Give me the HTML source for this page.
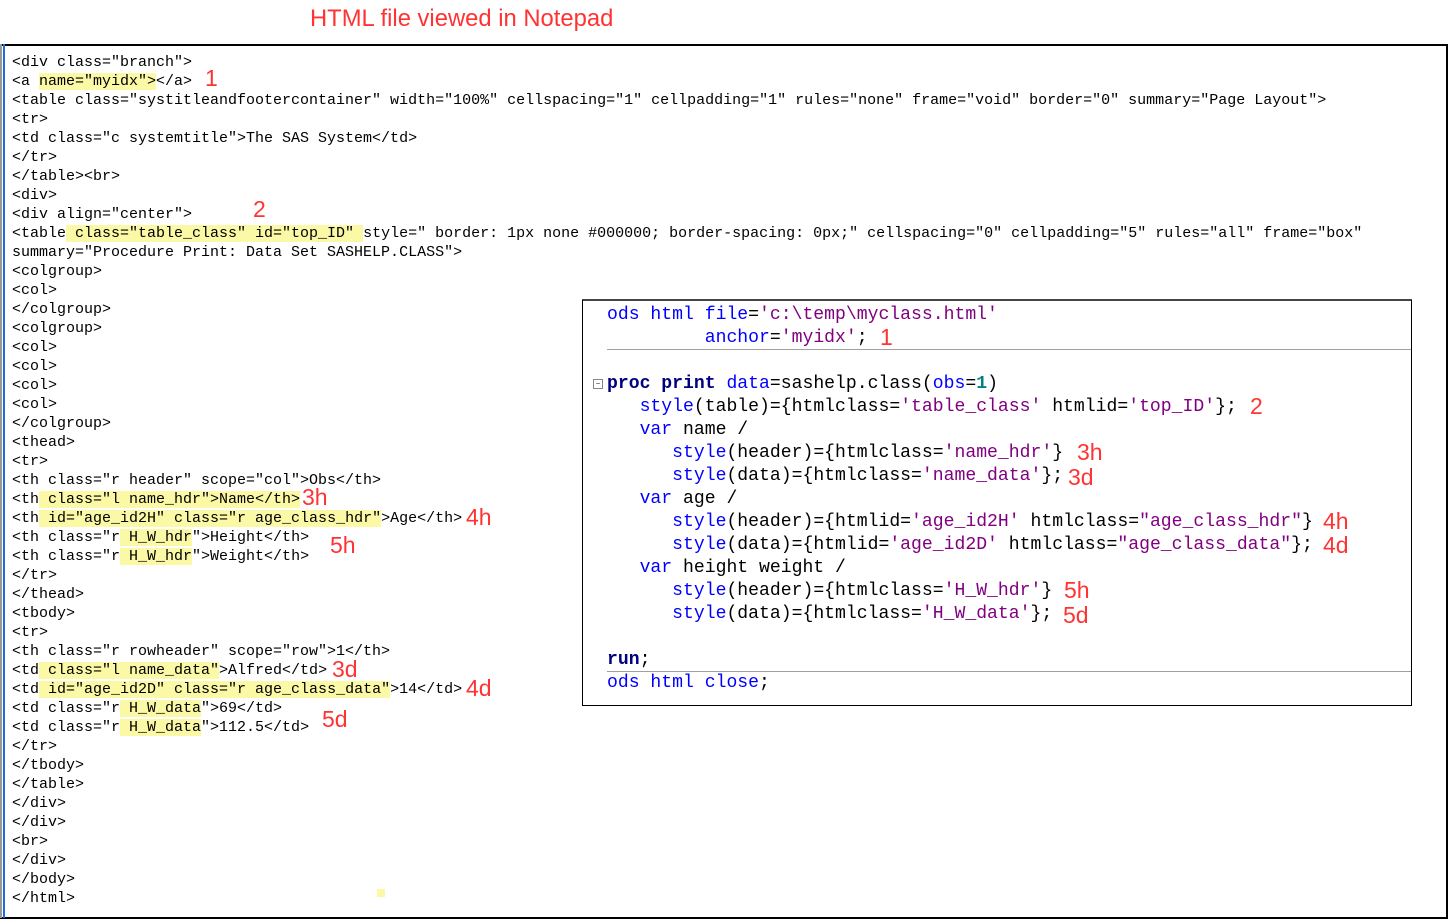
<!DOCTYPE html>
<html><head><meta charset="utf-8"><style>
*{margin:0;padding:0}
body{width:1448px;height:918px;background:#fff;position:relative;overflow:hidden;font-family:"Liberation Sans",sans-serif}
.title{position:absolute;left:310px;top:5px;font-size:23.8px;color:#ff3333;white-space:nowrap}
.frame{position:absolute;left:0;top:44px;width:1446px;height:871px;border-top:2px solid #000;border-right:2px solid #000;border-bottom:2px solid #000}
.gl{position:absolute;left:0;top:44px;width:2px;height:874px;background:#999}
.bl{position:absolute;left:3px;top:44px;width:2px;height:874px;background:#1a6fd8}
pre.l{position:absolute;left:12px;top:53px;font-family:"Liberation Mono",monospace;font-size:15px;line-height:19px;color:#000}
.h{background:#fbf8a6}
.a{position:absolute;font-size:23px;color:#ff3333;line-height:22px}
.box{position:absolute;left:582px;top:299px;width:828px;height:404px;border:1px solid #000;border-top:2px solid #444;background:#fff}
.r{position:absolute;left:607px;font-family:"Liberation Mono",monospace;font-size:18.1px;line-height:22px;white-space:pre;color:#000}
.k{color:#0000ff}.s{color:#800080}.n{color:#008080;font-weight:bold}.b{font-weight:bold;color:#000080}
.sep{position:absolute;left:607px;width:804px;height:1px;background:#a0a0a0}
.dot{position:absolute;left:377px;top:889px;width:8px;height:8px;background:#fbf8a6}
.fold{position:absolute;left:593px;top:379px;width:8px;height:8px;border:1px solid #888;font-size:8px;line-height:8px;text-align:center;color:#333}
</style></head><body>
<div class="title">HTML file viewed in Notepad</div>
<div class="frame"></div><div class="gl"></div><div class="bl"></div>
<pre class="l">&lt;div class="branch"&gt;
&lt;a <span class="h">name="myidx"&gt;</span>&lt;/a&gt;
&lt;table class="systitleandfootercontainer" width="100%" cellspacing="1" cellpadding="1" rules="none" frame="void" border="0" summary="Page Layout"&gt;
&lt;tr&gt;
&lt;td class="c systemtitle"&gt;The SAS System&lt;/td&gt;
&lt;/tr&gt;
&lt;/table&gt;&lt;br&gt;
&lt;div&gt;
&lt;div align="center"&gt;
&lt;table<span class="h"> class="table_class" id="top_ID" </span>style=" border: 1px none #000000; border-spacing: 0px;" cellspacing="0" cellpadding="5" rules="all" frame="box"
summary="Procedure Print: Data Set SASHELP.CLASS"&gt;
&lt;colgroup&gt;
&lt;col&gt;
&lt;/colgroup&gt;
&lt;colgroup&gt;
&lt;col&gt;
&lt;col&gt;
&lt;col&gt;
&lt;col&gt;
&lt;/colgroup&gt;
&lt;thead&gt;
&lt;tr&gt;
&lt;th class="r header" scope="col"&gt;Obs&lt;/th&gt;
&lt;th<span class="h"> class="l name_hdr"&gt;Name&lt;/th&gt;</span>
&lt;th<span class="h"> id="age_id2H" class="r age_class_hdr"</span>&gt;Age&lt;/th&gt;
&lt;th class="r<span class="h"> H_W_hdr</span>"&gt;Height&lt;/th&gt;
&lt;th class="r<span class="h"> H_W_hdr</span>"&gt;Weight&lt;/th&gt;
&lt;/tr&gt;
&lt;/thead&gt;
&lt;tbody&gt;
&lt;tr&gt;
&lt;th class="r rowheader" scope="row"&gt;1&lt;/th&gt;
&lt;td<span class="h"> class="l name_data"</span>&gt;Alfred&lt;/td&gt;
&lt;td<span class="h"> id="age_id2D" class="r age_class_data"</span>&gt;14&lt;/td&gt;
&lt;td class="r<span class="h"> H_W_data</span>"&gt;69&lt;/td&gt;
&lt;td class="r<span class="h"> H_W_data</span>"&gt;112.5&lt;/td&gt;
&lt;/tr&gt;
&lt;/tbody&gt;
&lt;/table&gt;
&lt;/div&gt;
&lt;/div&gt;
&lt;br&gt;
&lt;/div&gt;
&lt;/body&gt;
&lt;/html&gt;</pre>
<div class="dot"></div>
<div class="a" style="left:205px;top:67px">1</div>
<div class="a" style="left:253px;top:198px">2</div>
<div class="a" style="left:302px;top:486px">3h</div>
<div class="a" style="left:466px;top:506px">4h</div>
<div class="a" style="left:330px;top:534px">5h</div>
<div class="a" style="left:332px;top:658px">3d</div>
<div class="a" style="left:466px;top:677px">4d</div>
<div class="a" style="left:322px;top:708px">5d</div>

<div class="box"></div>
<div class="r" style="top:304px"><span class="k">ods html file</span>=<span class="s">'c:\temp\myclass.html'</span></div>
<div class="r" style="top:327px">         <span class="k">anchor</span>=<span class="s">'myidx'</span>;</div>
<div class="sep" style="top:349px"></div>
<div class="fold">−</div>
<div class="r" style="top:373px"><span class="b">proc print</span> <span class="k">data</span>=sashelp.class(<span class="k">obs</span>=<span class="n">1</span>)</div>
<div class="r" style="top:396px">   <span class="k">style</span>(table)={htmlclass=<span class="s">'table_class'</span> htmlid=<span class="s">'top_ID'</span>};</div>
<div class="r" style="top:419px">   <span class="k">var</span> name /</div>
<div class="r" style="top:442px">      <span class="k">style</span>(header)={htmlclass=<span class="s">'name_hdr'</span>}</div>
<div class="r" style="top:465px">      <span class="k">style</span>(data)={htmlclass=<span class="s">'name_data'</span>};</div>
<div class="r" style="top:488px">   <span class="k">var</span> age /</div>
<div class="r" style="top:511px">      <span class="k">style</span>(header)={htmlid=<span class="s">'age_id2H'</span> htmlclass=<span class="s">"age_class_hdr"</span>}</div>
<div class="r" style="top:534px">      <span class="k">style</span>(data)={htmlid=<span class="s">'age_id2D'</span> htmlclass=<span class="s">"age_class_data"</span>};</div>
<div class="r" style="top:557px">   <span class="k">var</span> height weight /</div>
<div class="r" style="top:580px">      <span class="k">style</span>(header)={htmlclass=<span class="s">'H_W_hdr'</span>}</div>
<div class="r" style="top:603px">      <span class="k">style</span>(data)={htmlclass=<span class="s">'H_W_data'</span>};</div>
<div class="r" style="top:649px"><span class="b">run</span>;</div>
<div class="sep" style="top:671px"></div>
<div class="r" style="top:672px"><span class="k">ods html close</span>;</div>
<div class="a" style="left:880px;top:326px">1</div>
<div class="a" style="left:1250px;top:395px">2</div>
<div class="a" style="left:1077px;top:441px">3h</div>
<div class="a" style="left:1068px;top:466px">3d</div>
<div class="a" style="left:1323px;top:510px">4h</div>
<div class="a" style="left:1323px;top:534px">4d</div>
<div class="a" style="left:1064px;top:579px">5h</div>
<div class="a" style="left:1063px;top:604px">5d</div>
</body></html>
